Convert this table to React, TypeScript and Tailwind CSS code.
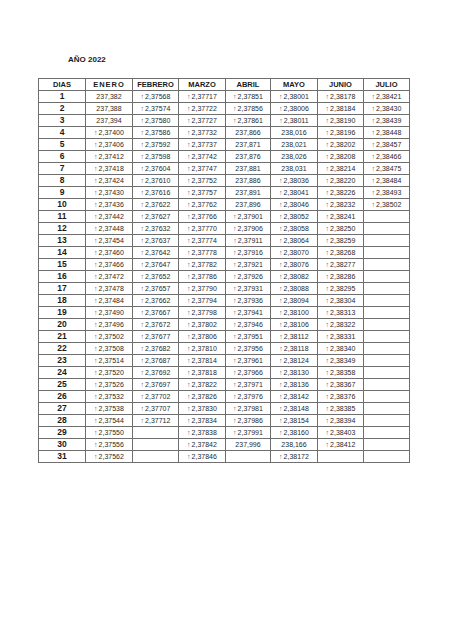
const months = ["ENERO", "FEBRERO", "MARZO", "ABRIL", "MAYO", "JUNIO", "JULIO"];

type Cell = { up: boolean; text: string } | null;

function up(n: number): Cell {
  return { up: true, text: `2,${n}` };
}

function flat(s: string): Cell {
  return { up: false, text: s };
}

function seq(start: number, step: number, count: number) {
  return Array.from({ length: count }, (_, i) => start + i * step);
}

const enero: Cell[] = [
  flat("237,382"),
  flat("237,388"),
  flat("237,394"),
  ...seq(37400, 6, 28).map(up),
];

const febrero: Cell[] = [
  ...seq(37568, 6, 10).map(up),
  ...seq(37627, 5, 18).map(up),
  null,
  null,
  null,
];

const marzo: Cell[] = [...seq(37717, 5, 10).map(up), ...seq(37766, 4, 21).map(up)];

const abril: Cell[] = [
  ...seq(37851, 5, 3).map(up),
  ...seq(866, 5, 7).map((n) => flat(`237,${n}`)),
  ...seq(37901, 5, 19).map(up),
  flat("237,996"),
  null,
];

const mayo: Cell[] = [
  ...seq(38001, 5, 3).map(up),
  ...seq(16, 5, 4).map((n) => flat(`238,0${n}`)),
  ...seq(38036, 5, 3).map(up),
  ...seq(38052, 6, 19).map(up),
  flat("238,166"),
  up(38172),
];

const junio: Cell[] = [...seq(38178, 6, 10).map(up), ...seq(38241, 9, 20).map(up), null];

const julio: Cell[] = [...seq(38421, 9, 10).map(up), ...Array.from({ length: 21 }, () => null)];

const columns = [enero, febrero, marzo, abril, mayo, junio, julio];

function Value({ cell }: { cell: Cell }) {
  if (!cell) return null;
  return (
    <span>
      {cell.up ? <span className="mr-[1px] text-[#555]">↑</span> : null}
      {cell.text}
    </span>
  );
}

export default function App() {
  return (
    <div className="min-h-screen bg-white pl-[38px] pt-[55px] font-['Liberation_Sans',Arial,sans-serif] text-[#1a1a1a]">
      <div className="pl-[30px] text-[8px] font-bold leading-[10px]">AÑO 2022</div>
      <table className="mt-[13px] w-[371px] table-fixed border-collapse">
        <colgroup>
          <col className="w-[47px]" />
          <col className="w-[47px]" />
          <col className="w-[46px]" />
          <col className="w-[47px]" />
          <col className="w-[45px]" />
          <col className="w-[47px]" />
          <col className="w-[46px]" />
          <col className="w-[46px]" />
        </colgroup>
        <thead>
          <tr className="h-[12px]">
            <th className="border border-[#6e6e6e] p-0 text-center text-[7.5px] font-bold leading-[11px]">DIAS</th>
            {months.map((m) => (
              <th
                key={m}
                className={`border border-[#6e6e6e] p-0 text-center text-[7.5px] font-bold leading-[11px] ${
                  m === "ENERO" ? "tracking-[1px]" : ""
                }`}
              >
                {m}
              </th>
            ))}
          </tr>
        </thead>
        <tbody>
          {Array.from({ length: 31 }, (_, i) => (
            <tr key={i} className="h-[12px]">
              <td className="border border-[#6e6e6e] p-0 text-center text-[8.5px] font-bold leading-[11px]">{i + 1}</td>
              {columns.map((col, c) => (
                <td
                  key={c}
                  className="border border-[#6e6e6e] p-0 text-center text-[7px] leading-[11px] text-[#2a2a2a]"
                >
                  <Value cell={col[i]} />
                </td>
              ))}
            </tr>
          ))}
        </tbody>
      </table>
    </div>
  );
}
